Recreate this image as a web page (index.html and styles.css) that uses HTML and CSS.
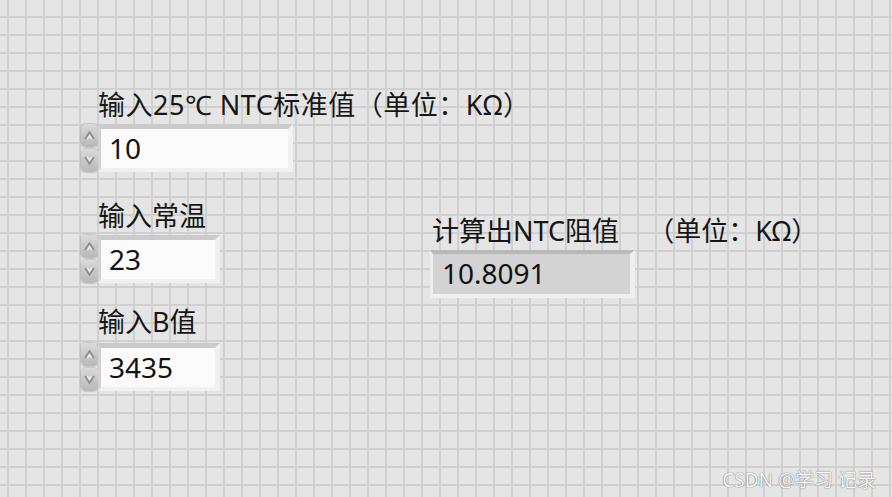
FILE: index.html
```html
<!DOCTYPE html>
<html lang="zh-CN">
<head>
<meta charset="utf-8">
<title>NTC</title>
<link rel="stylesheet" href="styles.css">
</head>
<body>
<div class="panel">
  <div class="inputs">
    <div class="ctl ctl-first">
      <div class="ctl-label ctl-label-long">输入25℃ NTC标准值（单位：KΩ）</div>
      <div class="ctl-row">
        <div class="spin">
          <div class="spin-btn"><svg width="11" height="9" viewBox="0 0 11 9"><path d="M1 8 L5.5 1 L10 8" fill="none" stroke="#8c8c8c" stroke-width="1.6"/><path d="M3.5 8 L5.5 4.8 L7.5 8" fill="none" stroke="#f4f4f4" stroke-width="1.2"/></svg></div>
          <div class="spin-btn"><svg width="11" height="9" viewBox="0 0 11 9"><path d="M1 1 L5.5 8 L10 1" fill="none" stroke="#8c8c8c" stroke-width="1.6"/><path d="M3.5 1 L5.5 4.2 L7.5 1" fill="none" stroke="#f4f4f4" stroke-width="1.2"/></svg></div>
        </div>
        <div class="numbox numbox-wide">10</div>
      </div>
    </div>
    <div class="ctl ctl-second">
      <div class="ctl-label">输入常温</div>
      <div class="ctl-row">
        <div class="spin">
          <div class="spin-btn"><svg width="11" height="9" viewBox="0 0 11 9"><path d="M1 8 L5.5 1 L10 8" fill="none" stroke="#8c8c8c" stroke-width="1.6"/><path d="M3.5 8 L5.5 4.8 L7.5 8" fill="none" stroke="#f4f4f4" stroke-width="1.2"/></svg></div>
          <div class="spin-btn"><svg width="11" height="9" viewBox="0 0 11 9"><path d="M1 1 L5.5 8 L10 1" fill="none" stroke="#8c8c8c" stroke-width="1.6"/><path d="M3.5 1 L5.5 4.2 L7.5 1" fill="none" stroke="#f4f4f4" stroke-width="1.2"/></svg></div>
        </div>
        <div class="numbox numbox-short">23</div>
      </div>
    </div>
    <div class="ctl ctl-third">
      <div class="ctl-label">输入B值</div>
      <div class="ctl-row">
        <div class="spin">
          <div class="spin-btn"><svg width="11" height="9" viewBox="0 0 11 9"><path d="M1 8 L5.5 1 L10 8" fill="none" stroke="#8c8c8c" stroke-width="1.6"/><path d="M3.5 8 L5.5 4.8 L7.5 8" fill="none" stroke="#f4f4f4" stroke-width="1.2"/></svg></div>
          <div class="spin-btn"><svg width="11" height="9" viewBox="0 0 11 9"><path d="M1 1 L5.5 8 L10 1" fill="none" stroke="#8c8c8c" stroke-width="1.6"/><path d="M3.5 1 L5.5 4.2 L7.5 1" fill="none" stroke="#f4f4f4" stroke-width="1.2"/></svg></div>
        </div>
        <div class="numbox numbox-short">3435</div>
      </div>
    </div>
  </div>
  <div class="output">
    <div class="out-label">计算出NTC阻值    （单位：KΩ）</div>
    <div class="indicator">10.8091</div>
  </div>
</div>
<div class="watermark">CSDN @学习 记录</div>
</body>
</html>
```
FILE: styles.css
```css
html, body {
  margin: 0;
  padding: 0;
}
body {
  width: 892px;
  height: 497px;
  position: relative;
  overflow: hidden;
  background-color: #e5e5e5;
  background-image:
    linear-gradient(to right, #d0d0d0 0, #d0d0d0 2px, transparent 2px),
    linear-gradient(to bottom, #d0d0d0 0, #d0d0d0 2px, transparent 2px);
  background-size: 18px 18px;
  background-position: 7px 16px;
  font-family: "Noto Sans", "Noto Sans CJK SC", sans-serif;
  color: #161616;
}
.panel {
  display: flex;
  align-items: flex-start;
  padding: 90px 0 0 81px;
}
.inputs {
  width: 212px;
  flex: none;
  display: flex;
  flex-direction: column;
}
.ctl-label {
  margin-left: 17px;
  font-size: 27px;
  line-height: 30px;
  white-space: pre;
}
.ctl-label-long {
  letter-spacing: 0.5px;
}
.ctl-row {
  display: flex;
  margin-top: 4px;
}
.ctl-second {
  margin-top: 29px;
}
.ctl-third {
  margin-top: 24px;
}
.ctl-third .ctl-row {
  margin-top: 6px;
}
.spin {
  width: 17px;
  display: flex;
  flex-direction: column;
  justify-content: space-between;
}
.spin-btn {
  height: 23px;
  border-radius: 5px;
  background: linear-gradient(to bottom, #dadada, #c4c4c4 60%, #b8b8b8);
  box-shadow: 0 0 1px 1px rgba(160,160,160,0.45);
  display: flex;
  align-items: center;
  justify-content: center;
}
.numbox {
  box-sizing: border-box;
  height: 48px;
  border-style: solid;
  border-width: 5px 5px 4px 3px;
  border-color: #cbcbcb #f1f1f1 #f1f1f1 #d2d2d2;
  background: #fbfbfb;
  font-size: 28px;
  line-height: 38px;
  padding-left: 8px;
  color: #111;
}
.numbox-wide {
  width: 195px;
}
.numbox-short {
  width: 122px;
}
.output {
  margin-left: 137px;
  margin-top: 126px;
  display: flex;
  flex-direction: column;
}
.out-label {
  margin-left: 2px;
  font-size: 27px;
  line-height: 30px;
  white-space: pre;
}
.indicator {
  box-sizing: border-box;
  margin-top: 4px;
  width: 205px;
  height: 48px;
  border-style: solid;
  border-width: 4px 5px 4px 3px;
  border-color: #b9b9b9 #f0f0f0 #f0f0f0 #ececec;
  background: #d3d3d3;
  font-size: 28px;
  line-height: 38px;
  padding-left: 9px;
  color: #111;
}
.watermark {
  position: absolute;
  right: 16px;
  bottom: 6px;
  font-size: 19px;
  line-height: 22px;
  color: #f7f7f7;
  text-shadow: 0 0 1px #7a7a7a, 0 0 1px #7a7a7a;
}
```
